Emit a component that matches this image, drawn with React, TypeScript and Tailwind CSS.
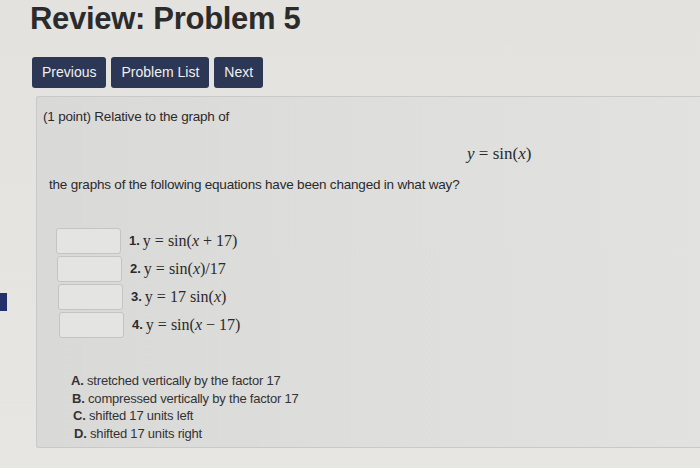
import React from "react";

const sans = { fontFamily: '"Liberation Sans", Arial, sans-serif' };
const serif = { fontFamily: '"Liberation Serif", "Times New Roman", serif' };

const equations: { n: number; eq: React.ReactNode }[] = [
  { n: 1, eq: <>y = sin(<i>x</i> + 17)</> },
  { n: 2, eq: <>y = sin(<i>x</i>)/17</> },
  { n: 3, eq: <>y = 17 sin(<i>x</i>)</> },
  { n: 4, eq: <>y = sin(<i>x</i> − 17)</> },
];

const choices = [
  ["A", "stretched vertically by the factor 17"],
  ["B", "compressed vertically by the factor 17"],
  ["C", "shifted 17 units left"],
  ["D", "shifted 17 units right"],
];

export default function App() {
  return (
    <div
      className="relative w-[700px] h-[468px] overflow-hidden bg-gradient-to-b from-[#e4e2df] to-[#e8e6e3] text-[#2a2a2a]"
      style={sans}
    >
      {/* sidebar tab peeking at the left */}
      <div className="absolute left-0 top-[293px] w-[7px] h-[18px] bg-[#23306b]" />

      <div className="pl-[30px] pt-[1px]">
        <h1 className="text-[31px] leading-[35px] font-bold tracking-[-0.3px] text-[#2b2b2b]">
          Review: Problem 5
        </h1>

        {/* nav buttons */}
        <div className="flex gap-[5px] mt-[21px] ml-[2px]">
          {["Previous", "Problem List", "Next"].map((b) => (
            <button
              key={b}
              className="h-[31px] px-[10px] rounded-[3px] bg-[#2c3756] text-[#f0f0f0] text-[14px]"
            >
              {b}
            </button>
          ))}
        </div>
      </div>

      {/* problem panel */}
      <div className="ml-[36px] mt-[8px] w-[700px] h-[352px] border border-[#c9c9c7] border-r-0 rounded-l-[3px] bg-gradient-to-r from-[#d9d9d8] via-[#dededd] to-[#e2e2e1] pl-[6px] pt-[12px] text-[13.5px] leading-[16px]">
        <p className="tracking-[-0.2px]">(1 point) Relative to the graph of</p>

        <div className="mt-[19px] pl-[424px] text-[17px] leading-[20px]" style={serif}>
          <i>y</i> = sin(<i>x</i>)
        </div>

        <p className="mt-[13px] ml-[6px] tracking-[-0.2px]">
          the graphs of the following equations have been changed in what way?
        </p>

        {/* answer rows */}
        <div className="mt-[35px] ml-[13px] flex flex-col gap-[2px]">
          {equations.map((e) => (
            <div key={e.n} className="flex items-center" style={{ marginLeft: (e.n - 1) * 1 }}>
              <div className="w-[65px] h-[26px] rounded-[3px] border border-[#c4c4c2] bg-[#e4e4e3]" />
              <span className="ml-[8px] font-bold text-[13px]">{e.n}.</span>
              <span className="ml-[3px] text-[16px]" style={serif}>
                {e.eq}
              </span>
            </div>
          ))}
        </div>

        {/* choices */}
        <div className="mt-[34px] ml-[28px] flex flex-col text-[13px] leading-[17.5px] tracking-[-0.2px] text-[#333]">
          {choices.map(([l, t], i) => (
            <div key={l} style={{ marginLeft: i * 1 }}>
              <b>{l}.</b> {t}
            </div>
          ))}
        </div>
      </div>
    </div>
  );
}
